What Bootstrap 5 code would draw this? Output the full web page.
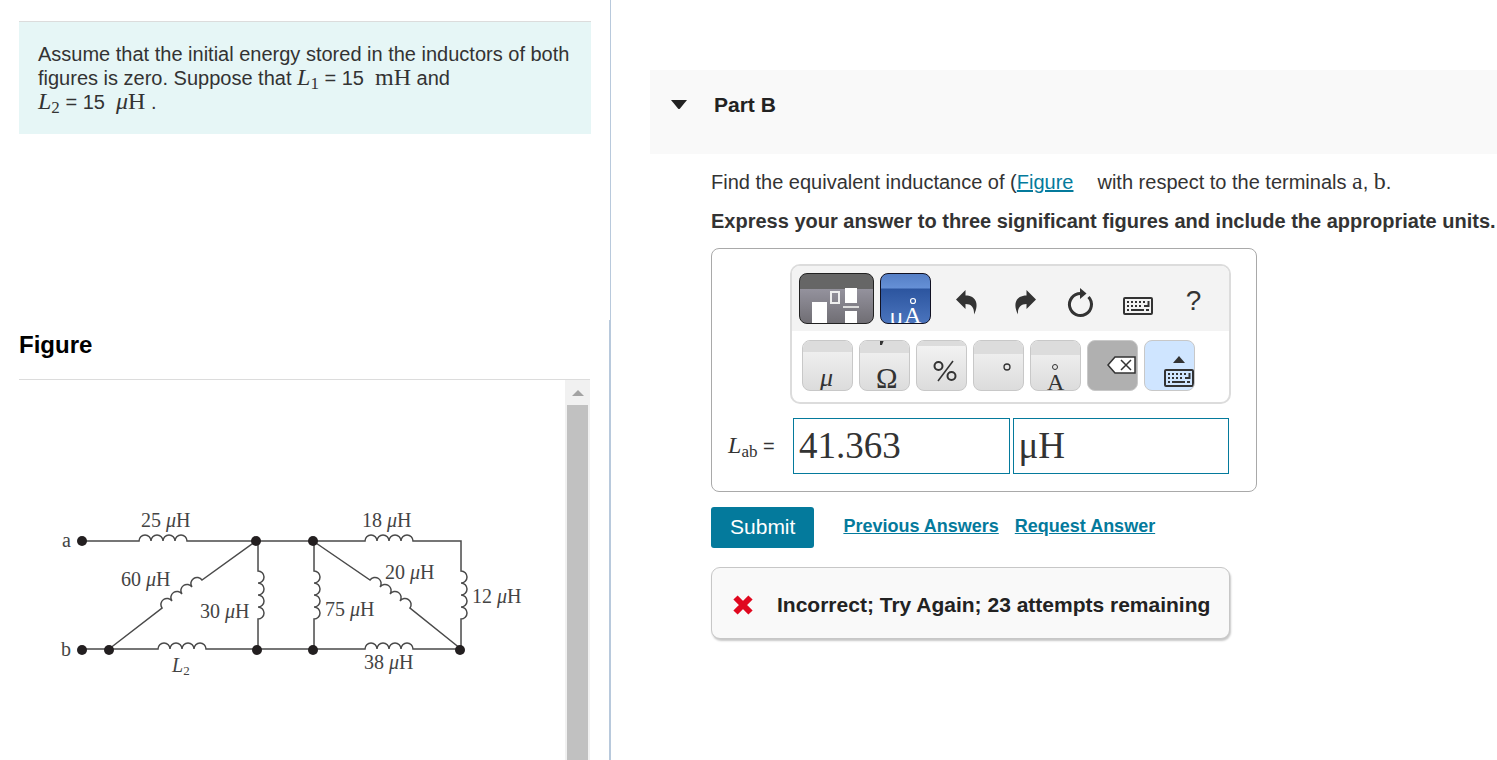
<!DOCTYPE html>
<html lang="en">
<head>
<meta charset="utf-8">
<meta name="viewport" content="width=device-width, initial-scale=1">
<title>Equivalent inductance – Part B</title>
<link href="https://cdn.jsdelivr.net/npm/bootstrap@5.3.0/dist/css/bootstrap.min.css" rel="stylesheet">
<style>
:root { --teal: #047a9c; --ink: #333; }
body { font-family: "Liberation Sans", Arial, sans-serif; font-size: 20px; line-height: 24px; color: var(--ink); background: #fff; }
.tex { font-family: "Liberation Serif", "Times New Roman", serif; font-size: 24px; line-height: 20px; }
.tex sub { font-size: 17px; line-height: 0; bottom: -4px; }
a { color: var(--teal); }

.problem-pane { flex: 0 0 calc(40.75% + 1px); }
.intro-part { height: 320px; padding: 21px 19px 0; border-right: 1px solid #b8c9dc; }
.intro-box { background: #e6f6f6; border-top: 1px solid #dcdcdc; padding: 20px 19px; }
.figure-part { padding: 0 19px; border-right: 2px solid #b8c9dc; min-height: 0; }
.figure-title { font-size: 24px; line-height: 28px; color: #000; padding: 11px 0 20px; }
.figure-frame { border-top: 1px solid #dcdcdc; min-height: 0; }
.fig-text { font-family: "Liberation Serif", "Times New Roman", serif; font-size: 20px; fill: #444; }
.fig-scroll { width: 25px; background: #f1f1f1; padding: 0 2px; }
.fig-scroll button { height: 25px; padding: 0; border: 0; background: none; }
.fig-thumb { background: #c1c1c1; }

.answer-pane { padding: 70px 0 0 39px; min-width: 0; }
.part-head { background: #f9f9f9; height: 84px; padding: 21px; color: #222; }
.part-toggle { border: 0; background: none; padding: 0; color: #222; }
.part-head h2 { font-size: 21px; line-height: 28px; margin-left: 27px; }
.part-body { padding: 16px 0 0 61px; }
.part-body p { margin-bottom: 15px; }
.gap-after-link { margin-right: 24px; }
.answer-box { width: 546px; max-width: 100%; border: 1px solid #a9a9a9; border-radius: 8px; padding: 15px 25px 17px 16px; }
.keypad { width: 441px; border: 2px solid #dcdcdc; border-radius: 10px; overflow: hidden; background: #fff; }
.key-top { background: #f3f3f3; height: 65px; padding: 7px; gap: 6px; }
.key-low { padding: 9px 10px 11px; gap: 6px; }
.key { flex: none; width: 51px; height: 51px; padding: 0; border: 1px solid #c8c8c8; border-radius: 8px; overflow: hidden; background: linear-gradient(#f4f4f4, #dcdcdc); }
.key svg, .tool svg { display: block; }
.key-serif { font-family: "Liberation Serif", serif; fill: var(--ink); }
.key-tpl { width: 75px; border-color: #222; background: linear-gradient(#666 0 15px, #94929d 15px, #706e74); }
.key-units { border-color: #112; background: linear-gradient(#557fc6, #6590d6 14px, #2c559f 15px, #4a74bd); }
.key-del { background: #b0b0b0; }
.key-kbd { background: #cfe5ff; }
.tool { flex: none; width: 57px; height: 51px; padding: 0; border: 0; background: none; color: var(--ink); font-size: 28px; line-height: 56px; }
.answer-line { margin: 14px 2px 0 0; }
.answer-fields { gap: 3px; width: 436px; }
.field { flex: 1 1 0; width: 0; height: 56px; border: 1px solid var(--teal); border-radius: 0; padding: 0 5px 2px; color: var(--ink); font-family: "Liberation Serif", "Times New Roman", serif; font-size: 37px; min-width: 0; background: #fff; }
.actions { margin: 15px 0 19px; }
.submit-btn { background: var(--teal); color: #fff; font-size: 21px; line-height: 24px; border: 0; border-radius: 3px; padding: 8px 19px 9px; margin-right: 29px; }
.submit-btn:hover { background: #03617c; color: #fff; }
.text-action { font-size: 18px; margin-bottom: 4px; }
.text-action + .text-action { margin-left: 16px; }
.feedback { width: 519px; max-width: 100%; min-height: 72px; background: #f9f9f9; border: 1px solid #c7c7c7; border-radius: 9px; box-shadow: 1px 2px 2px #c8c8c8; padding: 3px 18px 0 20px; color: #222; font-size: 21px; gap: 23px; }
</style>
<script src="https://cdn.jsdelivr.net/npm/bootstrap@5.3.0/dist/js/bootstrap.bundle.min.js" defer></script>
</head>
<body>
<svg width="0" height="0" class="position-absolute" aria-hidden="true">
  <symbol id="keyboard" viewBox="0 0 30 18">
    <rect x="1" y="1" width="28" height="16" rx="1" fill="none" stroke="#333" stroke-width="2"/>
    <path d="M4 5h18M4 9h16" fill="none" stroke="#333" stroke-width="2" stroke-dasharray="2 2"/>
    <path d="M4 13h2M8 13h13M23 13h3M21 9h4.500V4" fill="none" stroke="#333" stroke-width="2"/>
  </symbol>
</svg>
<div class="d-flex vh-100 overflow-hidden">
  <aside class="problem-pane d-flex flex-column">
    <section class="intro-part flex-shrink-0">
      <p class="intro-box mb-0">Assume that the initial energy stored in the inductors of both figures is zero. Suppose that <span class="text-nowrap"><span class="tex"><i>L</i><sub>1</sub></span> = 15 &nbsp;<span class="tex">mH</span></span> and<br>
      <span class="text-nowrap"><span class="tex"><i>L</i><sub>2</sub></span> = 15 &nbsp;<span class="tex"><i>μ</i>H</span> .</span></p>
    </section>
    <section class="figure-part d-flex flex-column flex-grow-1">
      <h2 class="figure-title fw-bold mb-0">Figure</h2>
      <div class="figure-frame d-flex flex-grow-1">
        <div class="flex-grow-1 overflow-hidden">
          <svg class="d-block w-100" viewBox="19 380 546 310" role="img" aria-label="Inductor network between terminals a and b">
            <g fill="none" stroke="#4a4a4a" stroke-width="1.500">
              <path d="M82 541H139a6 6 0 0 1 12 0a6 6 0 0 1 12 0a6 6 0 0 1 12 0a6 6 0 0 1 12 0H365a6 6 0 0 1 12 0a6 6 0 0 1 12 0a6 6 0 0 1 12 0a6 6 0 0 1 12 0H461V571a6 6 0 0 1 0 12a6 6 0 0 1 0 12a6 6 0 0 1 0 12a6 6 0 0 1 0 12V649"/>
              <path d="M82 649H158a6 6 0 0 1 12 0a6 6 0 0 1 12 0a6 6 0 0 1 12 0a6 6 0 0 1 12 0H365a6 6 0 0 1 12 0a6 6 0 0 1 12 0a6 6 0 0 1 12 0a6 6 0 0 1 12 0H461"/>
              <path d="M258 541V571a6 6 0 0 1 0 12a6 6 0 0 1 0 12a6 6 0 0 1 0 12a6 6 0 0 1 0 12V649"/>
              <path d="M314 541V571a6 6 0 0 1 0 12a6 6 0 0 1 0 12a6 6 0 0 1 0 12a6 6 0 0 1 0 12V649"/>
              <path d="M109 649L162 608a6 6 0 0 1 10-7a6 6 0 0 1 10-7a6 6 0 0 1 10-7a6 6 0 0 1 10-7L256 541"/>
              <path d="M313 541L370 580a6 6 0 0 1 10 7a6 6 0 0 1 10 7a6 6 0 0 1 10 7a6 6 0 0 1 10 7L461 649"/>
            </g>
            <g fill="#231f20">
              <circle cx="82" cy="541" r="5"/><circle cx="256" cy="541" r="5"/><circle cx="313" cy="541" r="5"/>
              <circle cx="82" cy="650" r="5"/><circle cx="109" cy="650" r="5"/><circle cx="257" cy="650" r="5"/><circle cx="313" cy="650" r="5"/><circle cx="460" cy="650" r="5"/>
            </g>
            <g class="fig-text">
              <text x="62" y="547">a</text><text x="61" y="656">b</text>
              <text x="141" y="527">25 <tspan font-style="italic">μ</tspan>H</text>
              <text x="121" y="586">60 <tspan font-style="italic">μ</tspan>H</text>
              <text x="200" y="618">30 <tspan font-style="italic">μ</tspan>H</text>
              <text x="172" y="672"><tspan font-style="italic">L</tspan><tspan font-size="13" dy="3">2</tspan></text>
              <text x="362" y="527">18 <tspan font-style="italic">μ</tspan>H</text>
              <text x="385" y="579">20 <tspan font-style="italic">μ</tspan>H</text>
              <text x="325" y="616">75 <tspan font-style="italic">μ</tspan>H</text>
              <text x="472" y="603">12 <tspan font-style="italic">μ</tspan>H</text>
              <text x="364" y="669">38 <tspan font-style="italic">μ</tspan>H</text>
            </g>
          </svg>
        </div>
        <div class="fig-scroll d-flex flex-column flex-shrink-0">
          <button type="button" aria-label="Scroll up" class="d-flex justify-content-center align-items-center"><svg width="12" height="6"><path d="M0 6L6 0L12 6z" fill="#a3a3a3"/></svg></button>
          <div class="fig-thumb flex-grow-1"></div>
        </div>
      </div>
    </section>
  </aside>

  <main class="answer-pane flex-grow-1">
    <header class="part-head d-flex align-items-start">
      <button class="part-toggle d-flex align-items-center" type="button" aria-label="Collapse Part B"><svg width="16" height="28"><path d="M0 9H16L9 17.500Q8 18.500 7 17.500z" fill="#222"/></svg></button>
      <h2 class="fw-bold mb-0">Part B</h2>
    </header>
    <div class="part-body">
      <p>Find the equivalent inductance of (<a href="#" class="gap-after-link">Figure</a>with respect to the terminals <span class="tex">a</span>, <span class="tex">b</span>.</p>
      <p class="fw-bold">Express your answer to three significant figures and include the appropriate units.</p>
      <form>
        <div class="answer-box d-flex flex-column">
          <div class="keypad align-self-end" role="toolbar" aria-label="Math keypad">
            <div class="key-top d-flex">
              <button type="button" class="key key-tpl" aria-label="Templates"><svg width="73" height="49" viewBox="1 1 73 49"><g fill="#fff"><path d="M13 29h15v22H13zM46 15h12v15H46zM46 38h12v13H46z"/><path d="M44 33h16v2H44z" fill="#ddd"/></g><path d="M32 19h8v11h-8z" fill="none" stroke="#eee" stroke-width="2"/></svg></button>
              <button type="button" class="key key-units" aria-label="Units"><svg width="49" height="49" viewBox="1 1 49 49"><g fill="#fff"><text x="10" y="52" font-size="22" font-family="Liberation Sans">μ</text><text x="24" y="50" font-size="24" font-family="Liberation Serif">A</text></g><circle cx="33" cy="28" r="2.500" fill="none" stroke="#fff" stroke-width="1.200"/></svg></button>
              <div class="d-flex">
                <button type="button" class="tool" aria-label="Undo"><svg width="57" height="51"><path d="M19 26.500L28.500 17V22.500C38 22.500 43 30 37 41.500C37.500 34 34 31 28.500 31V36Z" fill="#333"/></svg></button>
                <button type="button" class="tool" aria-label="Redo"><svg width="57" height="51"><path d="M42 26.500L32.500 17V22.500C23 22.500 18 30 24 41.500C23.500 34 27 31 32.500 31V36Z" fill="#333"/></svg></button>
                <button type="button" class="tool" aria-label="Reset"><svg width="57" height="51"><path d="M37.500 24A11 11 0 1 1 29.500 20.500" fill="none" stroke="#333" stroke-width="3"/><path d="M29 15l6.500 5.500L29 26z" fill="#333"/></svg></button>
                <button type="button" class="tool" aria-label="Keyboard shortcuts"><svg width="57" height="51"><use href="#keyboard" x="15" y="24" width="30" height="18"/></svg></button>
                <button type="button" class="tool" aria-label="Help">?</button>
              </div>
            </div>
            <div class="key-low d-flex">
              <button type="button" class="key" aria-label="mu"><svg width="49" height="49" viewBox="1 1 49 49"><path d="M0 0h51v12H0z" fill="#dcdcdc"/><text class="key-serif" x="18" y="46" font-size="26" font-style="italic">μ</text></svg></button>
              <button type="button" class="key" aria-label="ohm"><svg width="49" height="49" viewBox="1 1 49 49"><path d="M0 0h51v13H0z" fill="#dcdcdc"/><path d="M21 0h4l-2 5h-2z" fill="#333"/><text class="key-serif" x="17" y="48" font-size="29">Ω</text></svg></button>
              <button type="button" class="key" aria-label="percent"><svg width="49" height="49" viewBox="1 1 49 49"><path d="M0 0h51v6H0z" fill="#dcdcdc"/><g fill="none" stroke="#333" stroke-width="2"><circle cx="22.500" cy="26" r="4"/><circle cx="35.500" cy="36" r="4"/><path d="M37 21L22 41" stroke-width="1.500"/></g></svg></button>
              <button type="button" class="key" aria-label="degree"><svg width="49" height="49" viewBox="1 1 49 49"><path d="M0 0h51v14H0z" fill="#dcdcdc"/><circle cx="34" cy="27" r="3" fill="none" stroke="#333" stroke-width="1.300"/></svg></button>
              <button type="button" class="key" aria-label="angstrom"><svg width="49" height="49" viewBox="1 1 49 49"><path d="M0 0h51v15H0z" fill="#dcdcdc"/><circle cx="25" cy="27" r="2.500" fill="none" stroke="#333"/><text class="key-serif" x="17" y="50" font-size="24">A</text></svg></button>
              <button type="button" class="key key-del" aria-label="Delete"><svg width="49" height="49" viewBox="1 1 49 49"><path d="M21 25l7-8h20v16H28z" fill="#fff" stroke="#333" stroke-width="1.500"/><path d="M34 20l10 10M44 20L34 30" stroke="#333" stroke-width="1.500"/></svg></button>
              <button type="button" class="key key-kbd" aria-label="Show keyboard"><svg width="49" height="49" viewBox="1 1 49 49"><path d="M29 23l6-7l6 7z" fill="#333"/><use href="#keyboard" x="20" y="29" width="30" height="18"/></svg></button>
            </div>
          </div>
          <div class="answer-line d-flex align-items-center">
            <label for="value" class="flex-grow-1 text-nowrap"><span class="tex"><i>L</i><sub>ab</sub></span> =</label>
            <div class="d-flex answer-fields">
              <input id="value" class="field" type="text" value="41.363">
              <input class="field" type="text" value="μH" aria-label="Units">
            </div>
          </div>
        </div>
        <div class="d-flex align-items-center actions">
          <button type="submit" class="btn submit-btn">Submit</button>
          <a href="#" class="text-action fw-bold">Previous Answers</a>
          <a href="#" class="text-action fw-bold">Request Answer</a>
        </div>
      </form>
      <div class="feedback d-flex align-items-center fw-bold" role="alert">
        <svg width="22" height="22" class="flex-shrink-0" aria-hidden="true"><path d="M3.500 3.500L18.500 18.500M18.500 3.500L3.500 18.500" stroke="#e0081f" stroke-width="6"/></svg>
        <span>Incorrect; Try Again; 23 attempts remaining</span>
      </div>
    </div>
  </main>
</div>
</body>
</html>
